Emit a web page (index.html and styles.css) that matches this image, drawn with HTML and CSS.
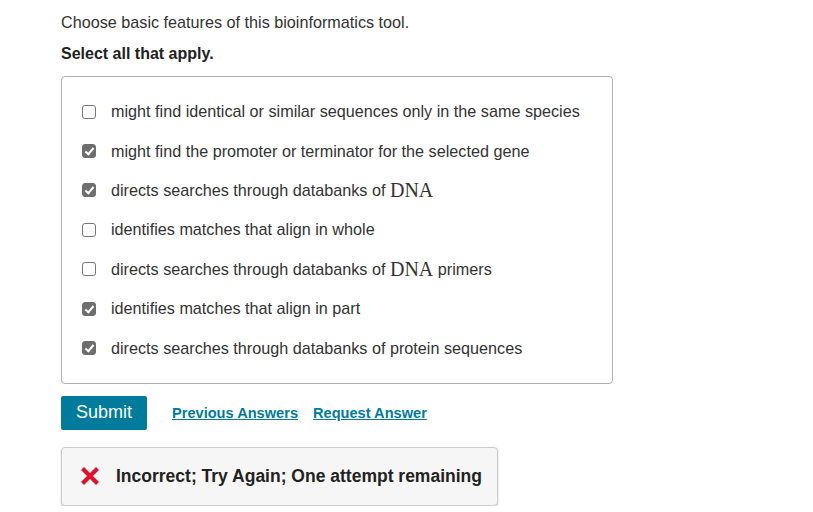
FILE: index.html
```html
<!DOCTYPE html>
<html lang="en">
    <head>
        <meta charset="UTF-8">
        <title>Question</title>
        <link rel="stylesheet" href="styles.css">
    </head>
    <body>
        <div class="question">
            <p class="prompt">Choose basic features of this bioinformatics tool.</p>
            <p class="instruction">Select all that apply.</p>

            <div class="choices">
                <label class="choice"><span class="box"></span>might find identical or similar sequences only in the same species</label>
                <label class="choice"><span class="box checked"></span>might find the promoter or terminator for the selected gene</label>
                <label class="choice"><span class="box checked"></span>directs searches through databanks of&nbsp;<span class="math">DNA</span></label>
                <label class="choice"><span class="box"></span>identifies matches that align in whole</label>
                <label class="choice"><span class="box"></span>directs searches through databanks of&nbsp;<span class="math">DNA</span>&nbsp;primers</label>
                <label class="choice"><span class="box checked"></span>identifies matches that align in part</label>
                <label class="choice"><span class="box checked"></span>directs searches through databanks of protein sequences</label>
            </div>

            <div class="actions">
                <button type="button" class="submit">Submit</button>
                <a href="#" class="link">Previous Answers</a>
                <a href="#" class="link">Request Answer</a>
            </div>

            <div class="feedback">
                <svg class="cross" width="18" height="18" viewBox="0 0 18 18">
                    <path d="M3 3 L15 15 M15 3 L3 15" stroke="#e0102a" stroke-width="4.2" stroke-linecap="square"/>
                </svg>
                <span>Incorrect; Try Again; One attempt remaining</span>
            </div>
        </div>
    </body>
</html>
```

FILE: styles.css
```css
* {
    margin: 0;
    padding: 0;
    box-sizing: border-box;
}
body {
    font-family: "Liberation Sans", Arial, sans-serif;
    color: #333;
    background: #fff;
}
.question {
    padding: 12px 0 0 61px;
    width: 613px;
}
.prompt {
    font-size: 16.2px;
    line-height: 20px;
}
.instruction {
    font-size: 16px;
    font-weight: bold;
    line-height: 20px;
    margin-top: 12px;
    color: #222;
}
.choices {
    margin-top: 12px;
    border: 1px solid #b0b0b0;
    border-radius: 4px;
    padding: 15px 0 15px 20px;
    display: flex;
    flex-direction: column;
}
.choice {
    display: flex;
    align-items: center;
    height: 39.4px;
    font-size: 16.2px;
    color: #333;
}
.box {
    width: 14px;
    height: 14px;
    border: 1px solid #777;
    border-radius: 3px;
    margin-right: 15px;
    flex-shrink: 0;
    background: #fff;
}
.box.checked {
    background: #6e6e6e;
    border-color: #6e6e6e;
    position: relative;
}
.box.checked::after {
    content: "";
    position: absolute;
    left: 4px;
    top: 1px;
    width: 3px;
    height: 7px;
    border: solid #fff;
    border-width: 0 2px 2px 0;
    transform: rotate(40deg);
}
.math {
    font-family: "Liberation Serif", "Times New Roman", serif;
    font-size: 20px;
    line-height: 20px;
}
.actions {
    display: flex;
    align-items: center;
    margin-top: 12px;
}
.submit {
    background: #007b9c;
    color: #fff;
    border: none;
    border-radius: 2px;
    font-family: "Liberation Sans", Arial, sans-serif;
    font-size: 18px;
    width: 86px;
    height: 34px;
    margin-right: 25px;
}
.link {
    color: #007b9c;
    font-size: 14.6px;
    font-weight: bold;
    margin-right: 15px;
}
.feedback {
    display: flex;
    align-items: center;
    margin-top: 17px;
    width: 437px;
    height: 59px;
    background: #f6f6f6;
    border: 1px solid #ccc;
    border-radius: 4px;
    box-shadow: 0 1px 2px rgba(0, 0, 0, 0.2);
    padding-left: 19px;
    font-size: 17.5px;
    font-weight: bold;
    color: #222;
}
.cross {
    margin-right: 17px;
}
```
